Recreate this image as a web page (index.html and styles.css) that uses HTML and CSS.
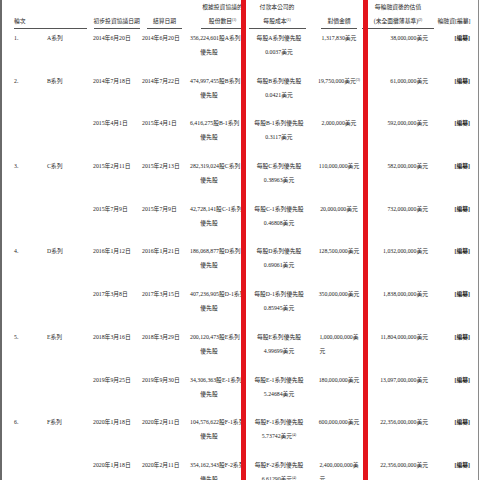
FILE: index.html
```html
<!DOCTYPE html>
<html lang="zh-Hant">
<head>
<meta charset="utf-8">
<link rel="stylesheet" href="styles.css">
</head>
<body>
<div class="page">
  <div class="table">
    <div class="row head">
      <div class="hc span2"><div class="hl"></div><div class="hl ul left w-round">輪次</div></div>
      <div class="hc"><div class="hl"></div><div class="hl ul w-d1">初步投資協議日期</div></div>
      <div class="hc"><div class="hl"></div><div class="hl ul w-d2">結算日期</div></div>
      <div class="hc"><div class="hblk w-sh"><div class="hl">根據投資協議的</div><div class="hl ul">股份數目<sup>(1)</sup></div></div></div>
      <div class="hc"><div class="hblk w-co"><div class="hl">付款本公司的</div><div class="hl ul">每股成本<sup>(1)</sup></div></div></div>
      <div class="hc"><div class="hl"></div><div class="hl ul w-cn">對價金額</div></div>
      <div class="hc"><div class="hblk w-va"><div class="hl">每輪融資後的估值</div><div class="hl ul">(未全面攤薄基準)<sup>(2)</sup></div></div></div>
      <div class="hc"><div class="hl"></div><div class="hl ul w-in">輪融資[編纂]</div></div>
    </div>

    <div class="row">
      <div class="c">1.</div><div class="c">A系列</div>
      <div class="c">2014年6月20日</div><div class="c">2014年6月20日</div>
      <div class="c sh">356,224,601股A系列<br>優先股</div>
      <div class="c co">每股A系列優先股<br>0.0037美元</div>
      <div class="c cn">1,317,830美元</div>
      <div class="c va">38,000,000美元</div>
      <div class="c in">[編纂]</div>
    </div>
    <div class="row">
      <div class="c">2.</div><div class="c">B系列</div>
      <div class="c">2014年7月18日</div><div class="c">2014年7月22日</div>
      <div class="c sh">474,997,455股B系列<br>優先股</div>
      <div class="c co">每股B系列優先股<br>0.0421美元</div>
      <div class="c cn">19,750,000美元<sup>(3)</sup></div>
      <div class="c va">61,000,000美元</div>
      <div class="c in">[編纂]</div>
    </div>
    <div class="row">
      <div class="c"></div><div class="c"></div>
      <div class="c">2015年4月1日</div><div class="c">2015年4月1日</div>
      <div class="c sh">6,416,275股B-1系列<br>優先股</div>
      <div class="c co">每股B-1系列優先股<br>0.3117美元</div>
      <div class="c cn">2,000,000美元</div>
      <div class="c va">592,000,000美元</div>
      <div class="c in">[編纂]</div>
    </div>
    <div class="row">
      <div class="c">3.</div><div class="c">C系列</div>
      <div class="c">2015年2月11日</div><div class="c">2015年2月13日</div>
      <div class="c sh">282,319,024股C系列<br>優先股</div>
      <div class="c co">每股C系列優先股<br>0.38963美元</div>
      <div class="c cn">110,000,000美元</div>
      <div class="c va">582,000,000美元</div>
      <div class="c in">[編纂]</div>
    </div>
    <div class="row">
      <div class="c"></div><div class="c"></div>
      <div class="c">2015年7月9日</div><div class="c">2015年7月9日</div>
      <div class="c sh">42,728,141股C-1系列<br>優先股</div>
      <div class="c co">每股C-1系列優先股<br>0.46808美元</div>
      <div class="c cn">20,000,000美元</div>
      <div class="c va">732,000,000美元</div>
      <div class="c in">[編纂]</div>
    </div>
    <div class="row">
      <div class="c">4.</div><div class="c">D系列</div>
      <div class="c">2016年1月12日</div><div class="c">2016年1月21日</div>
      <div class="c sh">186,068,877股D系列<br>優先股</div>
      <div class="c co">每股D系列優先股<br>0.69061美元</div>
      <div class="c cn">128,500,000美元</div>
      <div class="c va">1,032,000,000美元</div>
      <div class="c in">[編纂]</div>
    </div>
    <div class="row">
      <div class="c"></div><div class="c"></div>
      <div class="c">2017年3月8日</div><div class="c">2017年3月15日</div>
      <div class="c sh">407,236,905股D-1系列<br>優先股</div>
      <div class="c co">每股D-1系列優先股<br>0.85945美元</div>
      <div class="c cn">350,000,000美元</div>
      <div class="c va">1,838,000,000美元</div>
      <div class="c in">[編纂]</div>
    </div>
    <div class="row">
      <div class="c">5.</div><div class="c">E系列</div>
      <div class="c">2018年3月16日</div><div class="c">2018年3月29日</div>
      <div class="c sh">200,120,473股E系列<br>優先股</div>
      <div class="c co">每股E系列優先股<br>4.99699美元</div>
      <div class="c cn"><span class="wrapl">1,000,000,000美<br>元</span></div>
      <div class="c va">11,804,000,000美元</div>
      <div class="c in">[編纂]</div>
    </div>
    <div class="row">
      <div class="c"></div><div class="c"></div>
      <div class="c">2019年9月25日</div><div class="c">2019年9月30日</div>
      <div class="c sh">34,306,363股E-1系列<br>優先股</div>
      <div class="c co">每股E-1系列優先股<br>5.24684美元</div>
      <div class="c cn">180,000,000美元</div>
      <div class="c va">13,097,000,000美元</div>
      <div class="c in">[編纂]</div>
    </div>
    <div class="row">
      <div class="c">6.</div><div class="c">F系列</div>
      <div class="c">2020年1月18日</div><div class="c">2020年2月11日</div>
      <div class="c sh">104,576,622股F-1系列<br>優先股</div>
      <div class="c co">每股F-1系列優先股<br>5.73742美元<sup>(4)</sup></div>
      <div class="c cn">600,000,000美元</div>
      <div class="c va">22,356,000,000美元</div>
      <div class="c in">[編纂]</div>
    </div>
    <div class="row">
      <div class="c"></div><div class="c"></div>
      <div class="c">2020年1月18日</div><div class="c">2020年2月11日</div>
      <div class="c sh">354,162,343股F-2系列<br>優先股</div>
      <div class="c co">每股F-2系列優先股<br>6.61290美元<sup>(4)</sup></div>
      <div class="c cn"><span class="wrapl">2,400,000,000美<br>元</span></div>
      <div class="c va">22,356,000,000美元</div>
      <div class="c in">[編纂]</div>
    </div>
  </div>
  <div class="redline r1"></div>
  <div class="redline r2"></div>
</div>
</body>
</html>
```

FILE: styles.css
```css
html, body {
  margin: 0;
  padding: 0;
  background: #ffffff;
}
.page {
  position: relative;
  width: 479px;
  height: 480px;
  box-sizing: border-box;
  border-left: 2px solid #6a6a6a;
  border-right: 1.5px solid #8a8a8a;
  overflow: hidden;
  font-family: "Liberation Serif", "Noto Sans CJK TC", serif;
  font-size: 5.8px;
  color: #1e1e1e;
}
.table {
  padding-left: 12px;
}
.row {
  display: grid;
  grid-template-columns: 33px 46px 49px 48px 54px 72px 46px 66px 42px;
  height: 42.7px;
  line-height: 14px;
  white-space: nowrap;
}
.row.head {
  height: 31px;
}
.hc {
  display: flex;
  flex-direction: column;
  align-items: center;
}
.hc.span2 {
  grid-column: span 2;
  align-items: flex-start;
}
.hblk {
  display: flex;
  flex-direction: column;
  align-items: center;
}
.hl {
  height: 14px;
  text-align: center;
}
.hl.ul {
  border-bottom: 0.8px solid #555;
}
.hl.left {
  text-align: left;
}
.w-round { width: 73px; }
.w-d1 { width: 46px; margin-left: -2px; }
.w-d2 { width: 35px; margin-left: -3px; }
.w-sh { width: 44px; margin-left: 11px; }
.w-sh .hl { width: 44px; }
.w-co { width: 57px; margin-left: -6px; }
.w-co .hl { width: 57px; }
.w-cn { width: 36px; }
.w-va { width: 72px; margin-left: 6px; }
.w-va .hl { width: 72px; }
.w-in { width: 40px; margin-left: 10px; border-bottom: none !important; }
sup {
  font-size: 3.5px;
  vertical-align: 2.5px;
  line-height: 0;
}
.c {
  text-align: left;
}
.sh {
  padding-right: 16px;
  text-align: center;
}
.co {
  text-align: center;
  padding-right: 2px;
}
.cn {
  text-align: center;
}
.wrapl {
  display: inline-block;
  text-align: left;
}
.va {
  text-align: right;
}
.in {
  text-align: right;
  font-weight: bold;
}
.redline {
  position: absolute;
  top: 0;
  width: 5px;
  height: 480px;
  background: #e3141c;
}
.r1 { left: 239px; }
.r2 { left: 361px; }
```
